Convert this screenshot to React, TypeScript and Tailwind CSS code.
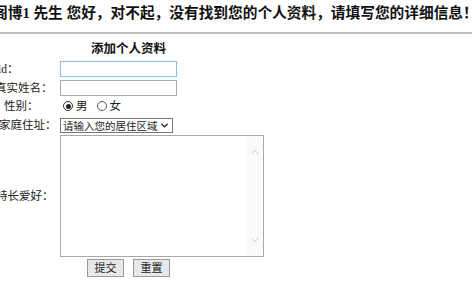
import React from 'react';
import { ChevronDown, ChevronUp } from 'lucide-react';

const cjk = { fontFamily: '"Liberation Serif", "Noto Sans CJK SC", serif' };

export default function App() {
  return (
    <div className="w-[474px] h-[289px] overflow-hidden bg-white text-[#111]" style={cjk}>
      {/* greeting header */}
      <div className="h-[32px] pt-[5px] ml-[-7px] whitespace-nowrap text-[14.7px] leading-[16px] font-bold">
        阁博1 先生 您好，对不起，没有找到您的个人资料，请填写您的详细信息！
      </div>
      <div className="h-[2px] w-[472px] bg-[#bdbdbd]" />

      {/* form */}
      <div className="pt-[6px] text-[11.5px] leading-[14px] text-[#222]">
        <div className="h-[18px] pl-[91px] text-[12.5px] leading-[18px] font-bold text-[#111]">添加个人资料</div>

        <div className="mt-[2px] flex h-[17px] items-center">
          <div className="w-[60px] shrink-0 whitespace-nowrap overflow-visible">
            <span className="ml-[-25px] inline-block">用户id：</span>
          </div>
          <div className="h-[16px] w-[117px] border border-[#8cc4e8] bg-white shadow-[0_0_1px_#bfe0f5]" />
        </div>

        <div className="mt-[2px] flex h-[17px] items-center">
          <div className="w-[60px] shrink-0 whitespace-nowrap">
            <span className="ml-[-5px] inline-block">真实姓名：</span>
          </div>
          <div className="h-[16px] w-[117px] border border-[#a9a9a9] bg-white" />
        </div>

        <div className="mt-[1px] flex h-[18px] items-center">
          <div className="w-[60px] shrink-0 whitespace-nowrap">
            <span className="ml-[4px] inline-block">性别：</span>
          </div>
          <div className="flex items-center">
            <span className="ml-[3px] flex h-[10px] w-[10px] items-center justify-center rounded-full border border-[#333]">
              <span className="h-[5px] w-[5px] rounded-full bg-[#222]" />
            </span>
            <span className="ml-[3px]">男</span>
            <span className="ml-[9px] h-[10px] w-[10px] rounded-full border border-[#555]" />
            <span className="ml-[3px]">女</span>
          </div>
        </div>

        <div className="mt-[2px] flex h-[16px] items-center">
          <div className="w-[60px] shrink-0 whitespace-nowrap">
            <span className="ml-[-1px] inline-block">家庭住址：</span>
          </div>
          <div
            className="flex h-[15px] w-[113px] items-center justify-between border border-[#767676] bg-white pl-[2px] pr-[2px] text-[10.5px] text-[#222]"
            style={{ fontFamily: '"Noto Sans CJK SC", sans-serif' }}
          >
            <span className="leading-[13px]">请输入您的居住区域</span>
            <ChevronDown className="h-[11px] w-[11px] text-[#111]" strokeWidth={3} />
          </div>
        </div>

        <div className="mt-[2px] flex h-[122px] items-center">
          <div className="w-[60px] shrink-0 whitespace-nowrap">
            <span className="ml-[-4px] inline-block">特长爱好：</span>
          </div>
          <div className="flex h-[122px] w-[204px] border border-[#a9a9a9] bg-white">
            <div className="flex-1" />
            <div className="flex w-[16px] flex-col items-center justify-between bg-[#fafafa] py-[10px]">
              <ChevronUp className="h-[12px] w-[12px] text-[#c4c4c4]" strokeWidth={2} />
              <ChevronDown className="h-[12px] w-[12px] text-[#c4c4c4]" strokeWidth={2} />
            </div>
          </div>
        </div>

        <div className="mt-[2px] flex h-[18px] gap-[9px] pl-[87px]">
          <div className="flex h-[18px] w-[37px] items-center justify-center border border-[#9a9a9a] bg-[#e8e8e8] text-[11px] text-[#222]">提交</div>
          <div className="flex h-[18px] w-[37px] items-center justify-center border border-[#9a9a9a] bg-[#e8e8e8] text-[11px] text-[#222]">重置</div>
        </div>
      </div>
    </div>
  );
}
